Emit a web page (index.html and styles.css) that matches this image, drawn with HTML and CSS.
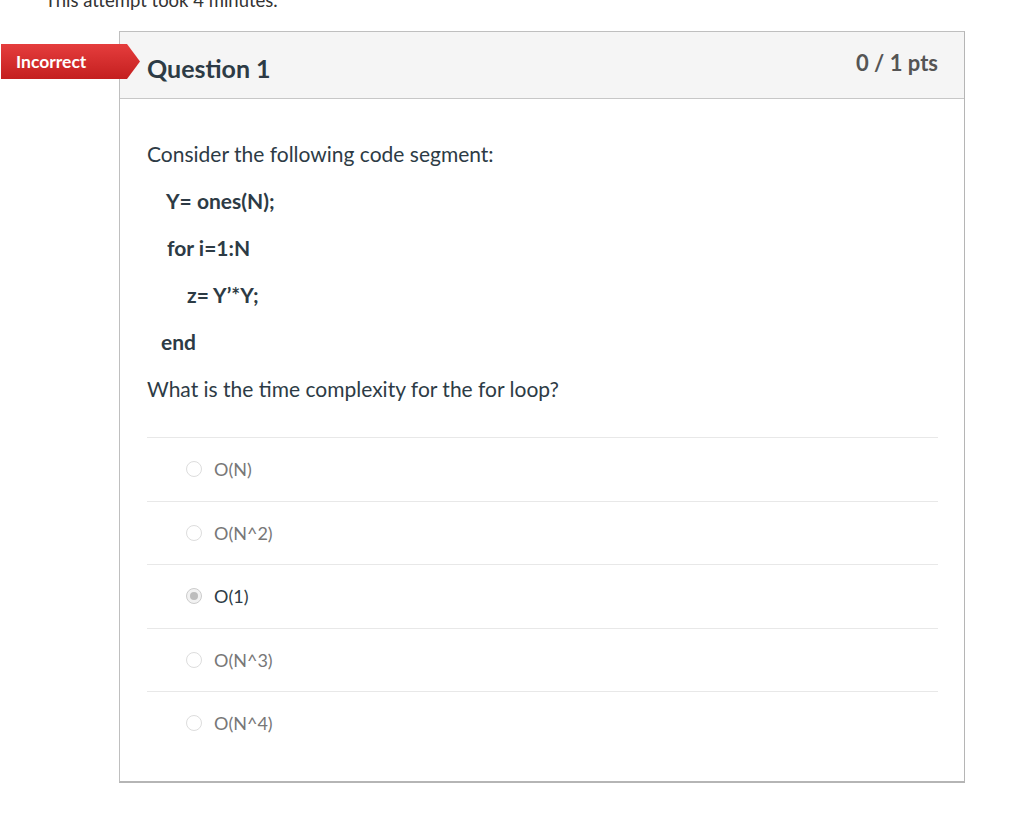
FILE: index.html
```html
<!DOCTYPE html>
<html lang="en">
<head>
    <meta charset="UTF-8">
    <title>Quiz Results</title>
    <link rel="stylesheet" href="styles.css">
</head>
<body>
    <!-- Attempt summary -->
    <p class="attempt-time">This attempt took 4 minutes.</p>

    <!-- Question card -->
    <div class="question">
        <span class="answer-badge">Incorrect</span>

        <div class="question-header">
            <span class="question-name">Question 1</span>
            <span class="question-points">0 / 1 pts</span>
        </div>

        <div class="question-body">
            <p class="question-text">Consider the following code segment:</p>
            <p class="code-line indent-1">Y= ones(N);</p>
            <p class="code-line indent-1b">for i=1:N</p>
            <p class="code-line indent-2">z= Y’*Y;</p>
            <p class="code-line indent-0">end</p>
            <p class="question-text">What is the time complexity for the for loop?</p>

            <div class="answers">
                <div class="answer">
                    <span class="radio"></span>
                    <span class="answer-label">O(N)</span>
                </div>
                <div class="answer">
                    <span class="radio"></span>
                    <span class="answer-label">O(N^2)</span>
                </div>
                <div class="answer selected">
                    <span class="radio"></span>
                    <span class="answer-label">O(1)</span>
                </div>
                <div class="answer">
                    <span class="radio"></span>
                    <span class="answer-label">O(N^3)</span>
                </div>
                <div class="answer">
                    <span class="radio"></span>
                    <span class="answer-label">O(N^4)</span>
                </div>
            </div>
        </div>
    </div>
</body>
</html>
```

FILE: styles.css
```css
* {
    margin: 0;
    padding: 0;
    box-sizing: border-box;
}

body {
    background: #fff;
    font-family: Lato, "Open Sans", sans-serif;
    color: #2d3b45;
}

/* Attempt summary (scrolled partly off the top) */
.attempt-time {
    font-size: 18.5px;
    line-height: 24px;
    margin-top: -12px;
    padding-left: 45px;
    color: #333;
}

/* Question card */
.question {
    position: relative;
    width: 846px;
    margin: 19px 0 0 119px;
    border: 1px solid #bfbfbf;
    border-right-color: #b5b5b5;
    border-bottom: 2px solid #b5b5b5;
}

.answer-badge {
    position: absolute;
    top: 12px;
    left: -119px;
    width: 139px;
    height: 35px;
    padding-left: 15px;
    display: flex;
    align-items: center;
    font-size: 17.5px;
    font-weight: 700;
    color: #fff;
    background: linear-gradient(#e53d3d, #c41f1f);
    clip-path: polygon(0 0, 126px 0, 139px 50%, 126px 100%, 0 100%);
}

.question-header {
    height: 67px;
    padding: 0 26px 0 27px;
    display: flex;
    justify-content: space-between;
    align-items: center;
    background: #f5f5f5;
    border-bottom: 1px solid #c7c7c7;
}

.question-name {
    font-size: 25px;
    font-weight: 700;
    margin-top: 6px;
}

.question-points {
    font-size: 22px;
    font-weight: 700;
    color: #555;
    margin-top: -5px;
}

/* Question body */
.question-body {
    padding: 40px 26px 26px 27px;
}

.question-text,
.code-line {
    font-size: 21px;
    line-height: 30px;
    margin-bottom: 17px;
}

.code-line {
    font-weight: 700;
}

.indent-0 { padding-left: 14px; }
.indent-1 { padding-left: 19px; }
.indent-1b { padding-left: 20px; }
.indent-2 { padding-left: 40px; }

/* Answers */
.answers {
    margin-top: 33px;
}

.answer {
    height: 63.5px;
    display: flex;
    align-items: center;
    padding-left: 39px;
    border-top: 1px solid #e8e8e8;
    color: #777;
    font-size: 18px;
}

.radio {
    width: 16px;
    height: 16px;
    border-radius: 50%;
    border: 1px solid #ddd;
    background: #fff;
    margin-right: 12px;
    position: relative;
}

.answer.selected {
    color: #2d3b45;
}

.answer.selected .radio {
    background: #f2f2f2;
    border-color: #ccc;
}

.answer.selected .radio::after {
    content: "";
    position: absolute;
    top: 3px;
    left: 3px;
    width: 8px;
    height: 8px;
    border-radius: 50%;
    background: #bdbdbd;
}
```
